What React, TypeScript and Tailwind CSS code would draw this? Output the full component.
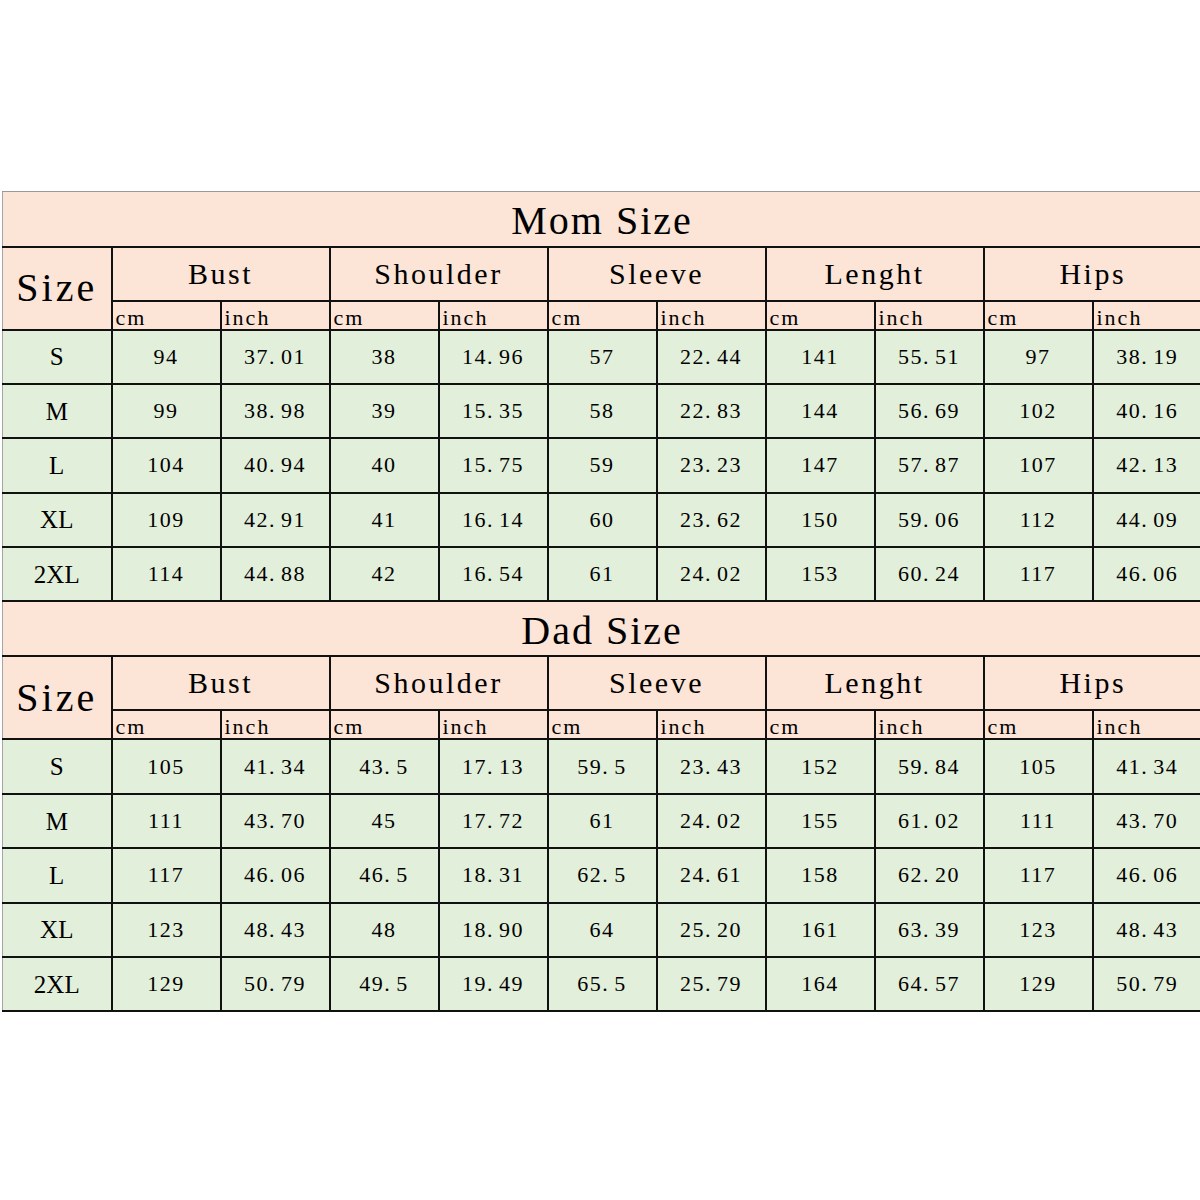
import React from 'react';

type Row = [string, ...string[]];

const headers = ['Bust', 'Shoulder', 'Sleeve', 'Lenght', 'Hips'];

const momRows: Row[] = [
  ['S', '94', '37.01', '38', '14.96', '57', '22.44', '141', '55.51', '97', '38.19'],
  ['M', '99', '38.98', '39', '15.35', '58', '22.83', '144', '56.69', '102', '40.16'],
  ['L', '104', '40.94', '40', '15.75', '59', '23.23', '147', '57.87', '107', '42.13'],
  ['XL', '109', '42.91', '41', '16.14', '60', '23.62', '150', '59.06', '112', '44.09'],
  ['2XL', '114', '44.88', '42', '16.54', '61', '24.02', '153', '60.24', '117', '46.06'],
];

const dadRows: Row[] = [
  ['S', '105', '41.34', '43.5', '17.13', '59.5', '23.43', '152', '59.84', '105', '41.34'],
  ['M', '111', '43.70', '45', '17.72', '61', '24.02', '155', '61.02', '111', '43.70'],
  ['L', '117', '46.06', '46.5', '18.31', '62.5', '24.61', '158', '62.20', '117', '46.06'],
  ['XL', '123', '48.43', '48', '18.90', '64', '25.20', '161', '63.39', '123', '48.43'],
  ['2XL', '129', '50.79', '49.5', '19.49', '65.5', '25.79', '164', '64.57', '129', '50.79'],
];

const cell = 'border-2 border-[#111]';
const firstCol = 'border-l border-l-[#a6a6a6]';
const lastCol = 'border-r border-r-[#b0b0b0]';

function Num({ v }: { v: string }) {
  const [a, b] = v.split('.');
  if (b === undefined) return <>{v}</>;
  return (
    <>
      {a}
      <span className="mr-[5px]">.</span>
      {b}
    </>
  );
}

function Section({ title, rows, first }: { title: string; rows: Row[]; first?: boolean }) {
  return (
    <>
      <tr>
        <td
          colSpan={11}
          className={`${cell} ${firstCol} ${lastCol} ${first ? 'border-t border-t-[#999]' : ''} h-[55px] bg-[#fce4d6] pt-1 text-center text-[40px] leading-none tracking-[2px]`}
        >
          {title}
        </td>
      </tr>
      <tr>
        <td rowSpan={2} className={`${cell} ${firstCol} bg-[#fce4d6] text-center text-[40px] leading-none tracking-[3px]`}>
          Size
        </td>
        {headers.map((h, i) => (
          <td
            key={h}
            colSpan={2}
            className={`${cell} ${i === headers.length - 1 ? lastCol : ''} h-[54px] bg-[#fce4d6] text-center text-[30px] leading-none tracking-[2.5px]`}
          >
            {h}
          </td>
        ))}
      </tr>
      <tr>
        {headers.map((h, i) => (
          <React.Fragment key={h}>
            <td className={`${cell} h-[29px] bg-[#fce4d6] px-[3px] align-bottom text-[22px] leading-[22px] tracking-[2px]`}>cm</td>
            <td
              className={`${cell} ${i === headers.length - 1 ? lastCol : ''} h-[29px] bg-[#fce4d6] px-[3px] align-bottom text-[22px] leading-[22px] tracking-[2px]`}
            >
              inch
            </td>
          </React.Fragment>
        ))}
      </tr>
      {rows.map((r) => (
        <tr key={r[0]}>
          {r.map((v, i) => (
            <td
              key={i}
              className={`${cell} ${i === 0 ? firstCol + ' text-[25px]' : 'text-[22px] tracking-[1.5px]'} ${i === 10 ? lastCol : ''} h-[54.4px] bg-[#e2efda] text-center leading-none`}
            >
              {i === 0 ? v : <Num v={v} />}
            </td>
          ))}
        </tr>
      ))}
    </>
  );
}

export default function App() {
  return (
    <div className="min-h-[1200px] bg-white pl-[2px] pt-[191px] font-['Liberation_Serif',serif] text-black">
      <table className="w-[1198px] table-fixed border-collapse">
        <colgroup>
          <col className="w-[109px]" />
          {Array.from({ length: 10 }).map((_, i) => (
            <col key={i} className="w-[109px]" />
          ))}
        </colgroup>
        <tbody>
          <Section title="Mom Size" rows={momRows} first />
          <Section title="Dad Size" rows={dadRows} />
        </tbody>
      </table>
    </div>
  );
}
